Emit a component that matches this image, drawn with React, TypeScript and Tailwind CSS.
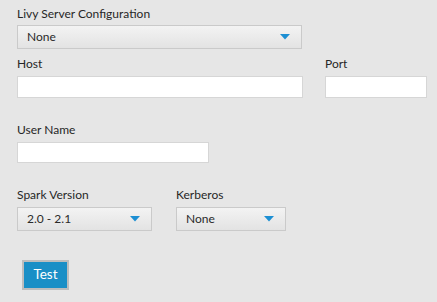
import React from 'react';

const Arrow = () => (
  <svg width="10" height="6" viewBox="0 0 10 6" className="shrink-0">
    <path d="M0 0 H10 L5 5.5 Z" fill="#1c8fd3" />
  </svg>
);

const Select = ({ value, className }: { value: string; className: string }) => (
  <div
    className={`h-[24px] flex items-center justify-between pl-[9px] pr-[11px] border border-[#cacaca] bg-gradient-to-b from-[#f3f3f3] to-[#e3e3e3] text-[#2a2a2a] ${className}`}
  >
    <span>{value}</span>
    <Arrow />
  </div>
);

const Label = ({ children }: { children: React.ReactNode }) => (
  <div className="h-[16px] leading-[16px] text-[#262626]">{children}</div>
);

const Input = ({ className }: { className: string }) => (
  <div className={`bg-white border border-[#d6d6d6] ${className}`} />
);

export default function App() {
  return (
    <div
      className="w-[437px] h-[302px] bg-[#e6e6e6] pl-[17px] pt-[6px] text-[12px] overflow-hidden"
      style={{ fontFamily: 'Lato, "Noto Sans", sans-serif' }}
    >
      <Label>Livy Server Configuration</Label>
      <Select value="None" className="mt-[3px] w-[285px]" />

      <div className="flex gap-[22px] mt-[7px]">
        <div className="flex flex-col">
          <Label>Host</Label>
          <Input className="mt-[4px] w-[286px] h-[22px]" />
        </div>
        <div className="flex flex-col">
          <Label>Port</Label>
          <Input className="mt-[4px] w-[102px] h-[22px]" />
        </div>
      </div>

      <div className="mt-[24px]">
        <Label>User Name</Label>
        <Input className="mt-[4px] w-[192px] h-[21px]" />
      </div>

      <div className="flex gap-[24px] mt-[24px]">
        <div className="flex flex-col">
          <Label>Spark Version</Label>
          <Select value="2.0 - 2.1" className="mt-[4px] w-[135px]" />
        </div>
        <div className="flex flex-col">
          <Label>Kerberos</Label>
          <Select value="None" className="mt-[4px] w-[110px]" />
        </div>
      </div>

      <button className="mt-[29px] ml-[5px] w-[47px] h-[30px] bg-[#1a8fc6] border-2 border-[#bdbdbd] text-white text-[13.5px] leading-none">
        Test
      </button>
    </div>
  );
}
